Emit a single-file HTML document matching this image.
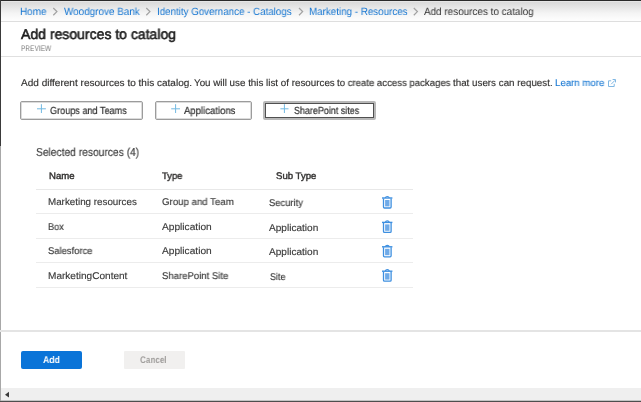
<!DOCTYPE html>
<html><head><meta charset="utf-8">
<style>
html,body{margin:0;padding:0;}
body{width:641px;height:402px;overflow:hidden;position:relative;background:#fff;font-family:"Liberation Sans",sans-serif;}
.t{position:absolute;white-space:pre;transform-origin:0 0;text-rendering:geometricPrecision;will-change:transform;font-family:"Liberation Sans",sans-serif;}
.r{position:absolute;}
</style></head><body>
<!-- breadcrumb bar -->
<div class="r" style="left:0;top:0;width:641px;height:22px;background:linear-gradient(#dadada 2px,#e3e3e3 6px,#f4f4f4 13px,#fdfdfd 20px);"></div>
<div class="r" style="left:0;top:0;width:641px;height:1px;background:#2a2a2a;"></div>
<div class="r" style="left:0;top:1px;width:641px;height:1px;background:#e6e6e6;"></div>
<div class="r" style="left:0;top:21px;width:641px;height:1px;background:#dedede;"></div>
<!-- title sep -->
<div class="r" style="left:0;top:56px;width:641px;height:1px;background:#e0e0e0;"></div>
<!-- left edge -->
<div class="r" style="left:0;top:0;width:1px;height:146px;background:#3a3a3a;"></div>
<div class="r" style="left:0;top:146px;width:1px;height:256px;background:#a8a8a8;"></div>
<!-- breadcrumb chevrons -->
<svg class="r" style="left:0;top:0" width="641" height="22">
<g fill="none" stroke="#a2a2a2" stroke-width="1.25">
<path d="M53.3 8 L56.9 11.6 L53.3 15.2"/>
<path d="M146.3 8 L149.9 11.6 L146.3 15.2"/>
<path d="M299 8 L302.6 11.6 L299 15.2"/>
<path d="M413.8 8 L417.4 11.6 L413.8 15.2"/>
</g></svg>
<!-- external link icon -->
<svg class="r" style="left:600px;top:74px" width="22" height="18">
<g fill="none" stroke="#7fb7e3" stroke-width="1">
<path d="M11.2 6.8 H8.5 V12.5 H14.2 V9.8"/>
<path d="M11.2 10.2 L15 6.3"/>
<path d="M12.6 5.5 H15.5 V8.4"/>
</g></svg>
<!-- buttons -->
<div class="r" style="left:20px;top:101px;width:121px;height:17px;border:1px solid #9c9c9c;border-radius:2px;box-shadow:inset 0 0 0 1px #dcdcdc;"></div>
<div class="r" style="left:155px;top:101px;width:95px;height:17px;border:1px solid #9c9c9c;border-radius:2px;box-shadow:inset 0 0 0 1px #dcdcdc;"></div>
<div class="r" style="left:263px;top:101px;width:109px;height:15px;border:2px solid #b8b8b8;border-radius:2px;box-shadow:inset 0 0 0 1px #505050;"></div>
<svg class="r" style="left:0;top:95px" width="641" height="30">
<g fill="none" stroke="#72b9e2" stroke-width="1">
<path d="M37 13.8 H45.9 M41.4 9.2 V18"/>
<path d="M171.2 13.8 H180 M175.6 9.2 V18"/>
<path d="M280.4 13.8 H288.5 M284.4 9.2 V18"/>
</g></svg>
<!-- table lines -->
<div class="r" style="left:36px;top:189px;width:377px;height:1px;background:#e8e8e8;"></div>
<div class="r" style="left:36px;top:213px;width:377px;height:1px;background:#ececec;"></div>
<div class="r" style="left:36px;top:238px;width:377px;height:1px;background:#ececec;"></div>
<div class="r" style="left:36px;top:262px;width:377px;height:1px;background:#ececec;"></div>
<div class="r" style="left:36px;top:287px;width:377px;height:1px;background:#ececec;"></div>
<!-- trash icons -->
<svg class="r" style="left:0;top:0" width="641" height="402">
<g transform="translate(0 0)">
<path d="M385.3 197.9 Q385.7 196.5 387.3 196.5 Q388.9 196.5 389.3 197.9" fill="none" stroke="#3d8fe0" stroke-width="1.2"/>
<path d="M382 198 H392.4" stroke="#3d8fe0" stroke-width="1.4"/>
<path d="M383.5 198.5 V207 Q383.5 208 384.5 208 H390.1 Q391.1 208 391.1 207 V198.5" fill="none" stroke="#3d8fe0" stroke-width="1.3"/>
<rect x="385.1" y="200" width="4.4" height="6.4" fill="#6eaae8"/>
</g>
<g transform="translate(0 24.4)">
<path d="M385.3 197.9 Q385.7 196.5 387.3 196.5 Q388.9 196.5 389.3 197.9" fill="none" stroke="#3d8fe0" stroke-width="1.2"/>
<path d="M382 198 H392.4" stroke="#3d8fe0" stroke-width="1.4"/>
<path d="M383.5 198.5 V207 Q383.5 208 384.5 208 H390.1 Q391.1 208 391.1 207 V198.5" fill="none" stroke="#3d8fe0" stroke-width="1.3"/>
<rect x="385.1" y="200" width="4.4" height="6.4" fill="#6eaae8"/>
</g>
<g transform="translate(0 48.8)">
<path d="M385.3 197.9 Q385.7 196.5 387.3 196.5 Q388.9 196.5 389.3 197.9" fill="none" stroke="#3d8fe0" stroke-width="1.2"/>
<path d="M382 198 H392.4" stroke="#3d8fe0" stroke-width="1.4"/>
<path d="M383.5 198.5 V207 Q383.5 208 384.5 208 H390.1 Q391.1 208 391.1 207 V198.5" fill="none" stroke="#3d8fe0" stroke-width="1.3"/>
<rect x="385.1" y="200" width="4.4" height="6.4" fill="#6eaae8"/>
</g>
<g transform="translate(0 73.2)">
<path d="M385.3 197.9 Q385.7 196.5 387.3 196.5 Q388.9 196.5 389.3 197.9" fill="none" stroke="#3d8fe0" stroke-width="1.2"/>
<path d="M382 198 H392.4" stroke="#3d8fe0" stroke-width="1.4"/>
<path d="M383.5 198.5 V207 Q383.5 208 384.5 208 H390.1 Q391.1 208 391.1 207 V198.5" fill="none" stroke="#3d8fe0" stroke-width="1.3"/>
<rect x="385.1" y="200" width="4.4" height="6.4" fill="#6eaae8"/>
</g>

</svg>
<!-- bottom sep -->
<div class="r" style="left:0;top:330px;width:641px;height:2px;background:#e4e4e4;"></div>
<div class="r" style="left:21px;top:351px;width:61px;height:18px;background:#0a74d8;border-radius:2px;"></div>
<div class="r" style="left:124px;top:351px;width:60.5px;height:18px;background:#f1f0ef;border-radius:1px;"></div>
<!-- scrollbar -->
<div class="r" style="left:1px;top:388px;width:640px;height:12px;background:#efefef;"></div>
<div class="r" style="left:1px;top:400px;width:640px;height:1px;background:#c4c4c4;"></div>
<div class="r" style="left:0;top:401px;width:641px;height:1px;background:#4e4e4e;"></div>
<svg class="r" style="left:0;top:388px" width="20" height="14"><path d="M5 6.8 L9 3.8 V9.6 Z" fill="#3a3a3a"/></svg>
<div class="t" style="left:19.60px;top:7.0px;font-size:10.5px;line-height:10.5px;font-weight:400;color:#1777d2;transform:scaleX(0.9429);">Home</div>
<div class="t" style="left:63.80px;top:7.0px;font-size:10.5px;line-height:10.5px;font-weight:400;color:#1777d2;transform:scaleX(0.9425);">Woodgrove Bank</div>
<div class="t" style="left:156.90px;top:7.0px;font-size:10.5px;line-height:10.5px;font-weight:400;color:#1777d2;transform:scaleX(0.9297);">Identity Governance - Catalogs</div>
<div class="t" style="left:309.00px;top:7.0px;font-size:10.5px;line-height:10.5px;font-weight:400;color:#1777d2;transform:scaleX(0.9340);">Marketing - Resources</div>
<div class="t" style="left:424.20px;top:7.0px;font-size:10.5px;line-height:10.5px;font-weight:400;color:#333;transform:scaleX(0.9444);">Add resources to catalog</div>
<div class="t" style="left:21.00px;top:27.5px;font-size:14.2px;line-height:14.2px;font-weight:400;color:#1b1b1b;transform:scaleX(0.9879);-webkit-text-stroke:0.55px #1b1b1b;">Add resources to catalog</div>
<div class="t" style="left:21.00px;top:44.6px;font-size:8px;line-height:8px;font-weight:400;color:#777;transform:scaleX(0.8176);">PREVIEW</div>
<div class="t" style="left:21.20px;top:79.4px;font-size:9.8px;line-height:9.8px;font-weight:400;color:#323130;transform:scaleX(1.0247);-webkit-text-stroke:0.15px #323130;">Add different resources to this catalog.</div>
<div class="t" style="left:193.70px;top:79.4px;font-size:9.8px;line-height:9.8px;font-weight:400;color:#323130;transform:scaleX(1.0007);-webkit-text-stroke:0.15px #323130;">You will use this list of resources</div>
<div class="t" style="left:337.30px;top:79.4px;font-size:9.8px;line-height:9.8px;font-weight:400;color:#323130;transform:scaleX(0.9784);-webkit-text-stroke:0.15px #323130;">to create access packages</div>
<div class="t" style="left:453.30px;top:79.4px;font-size:9.8px;line-height:9.8px;font-weight:400;color:#323130;transform:scaleX(0.9990);-webkit-text-stroke:0.15px #323130;">that users can request.</div>
<div class="t" style="left:555.40px;top:79.4px;font-size:9.8px;line-height:9.8px;font-weight:400;color:#1777d2;transform:scaleX(0.9840);-webkit-text-stroke:0.1px #1777d2;">Learn more</div>
<div class="t" style="left:49.50px;top:106.6px;font-size:10.3px;line-height:10.3px;font-weight:400;color:#333;transform:scaleX(0.8839);-webkit-text-stroke:0.2px #333;">Groups and Teams</div>
<div class="t" style="left:184.30px;top:106.6px;font-size:10.3px;line-height:10.3px;font-weight:400;color:#333;transform:scaleX(0.9268);-webkit-text-stroke:0.2px #333;">Applications</div>
<div class="t" style="left:293.50px;top:106.6px;font-size:10.3px;line-height:10.3px;font-weight:400;color:#333;transform:scaleX(0.8707);-webkit-text-stroke:0.2px #333;">SharePoint sites</div>
<div class="t" style="left:35.80px;top:147.9px;font-size:11.5px;line-height:11.5px;font-weight:400;color:#3c3c3c;transform:scaleX(0.8914);-webkit-text-stroke:0.15px #3c3c3c;">Selected resources (4)</div>
<div class="t" style="left:48.70px;top:171.8px;font-size:9.6px;line-height:9.6px;font-weight:400;color:#323130;transform:scaleX(1.0000);-webkit-text-stroke:0.4px #323130;">Name</div>
<div class="t" style="left:162.10px;top:171.8px;font-size:9.6px;line-height:9.6px;font-weight:400;color:#323130;transform:scaleX(0.9762);-webkit-text-stroke:0.4px #323130;">Type</div>
<div class="t" style="left:275.70px;top:171.8px;font-size:9.6px;line-height:9.6px;font-weight:400;color:#323130;transform:scaleX(0.9976);-webkit-text-stroke:0.4px #323130;">Sub Type</div>
<div class="t" style="left:48.20px;top:198.1px;font-size:9.8px;line-height:9.8px;font-weight:400;color:#3a3a3a;transform:scaleX(1.0011);-webkit-text-stroke:0.15px #3a3a3a;">Marketing resources</div>
<div class="t" style="left:162.10px;top:198.1px;font-size:9.8px;line-height:9.8px;font-weight:400;color:#3a3a3a;transform:scaleX(0.9863);-webkit-text-stroke:0.15px #3a3a3a;">Group and Team</div>
<div class="t" style="left:269.40px;top:198.9px;font-size:9.8px;line-height:9.8px;font-weight:400;color:#3a3a3a;transform:scaleX(0.9583);-webkit-text-stroke:0.15px #3a3a3a;">Security</div>
<div class="t" style="left:48.20px;top:222.7px;font-size:9.8px;line-height:9.8px;font-weight:400;color:#3a3a3a;transform:scaleX(0.9412);-webkit-text-stroke:0.15px #3a3a3a;">Box</div>
<div class="t" style="left:161.80px;top:222.7px;font-size:9.8px;line-height:9.8px;font-weight:400;color:#3a3a3a;transform:scaleX(1.0375);-webkit-text-stroke:0.15px #3a3a3a;">Application</div>
<div class="t" style="left:268.90px;top:223.5px;font-size:9.8px;line-height:9.8px;font-weight:400;color:#3a3a3a;transform:scaleX(1.0292);-webkit-text-stroke:0.15px #3a3a3a;">Application</div>
<div class="t" style="left:48.20px;top:247.2px;font-size:9.8px;line-height:9.8px;font-weight:400;color:#3a3a3a;transform:scaleX(0.9609);-webkit-text-stroke:0.15px #3a3a3a;">Salesforce</div>
<div class="t" style="left:161.80px;top:247.2px;font-size:9.8px;line-height:9.8px;font-weight:400;color:#3a3a3a;transform:scaleX(1.0375);-webkit-text-stroke:0.15px #3a3a3a;">Application</div>
<div class="t" style="left:268.90px;top:248.0px;font-size:9.8px;line-height:9.8px;font-weight:400;color:#3a3a3a;transform:scaleX(1.0292);-webkit-text-stroke:0.15px #3a3a3a;">Application</div>
<div class="t" style="left:48.20px;top:271.8px;font-size:9.8px;line-height:9.8px;font-weight:400;color:#3a3a3a;transform:scaleX(1.0269);-webkit-text-stroke:0.15px #3a3a3a;">MarketingContent</div>
<div class="t" style="left:161.80px;top:271.8px;font-size:9.8px;line-height:9.8px;font-weight:400;color:#3a3a3a;transform:scaleX(0.9735);-webkit-text-stroke:0.15px #3a3a3a;">SharePoint Site</div>
<div class="t" style="left:269.80px;top:272.6px;font-size:9.8px;line-height:9.8px;font-weight:400;color:#3a3a3a;transform:scaleX(0.9118);-webkit-text-stroke:0.15px #3a3a3a;">Site</div>
<div class="t" style="left:42.75px;top:355.9px;font-size:9.7px;line-height:9.7px;font-weight:700;color:#fff;transform:scaleX(0.8947);">Add</div>
<div class="t" style="left:140.40px;top:355.9px;font-size:9.7px;line-height:9.7px;font-weight:700;color:#a19f9d;transform:scaleX(0.8391);">Cancel</div>
</body></html>
